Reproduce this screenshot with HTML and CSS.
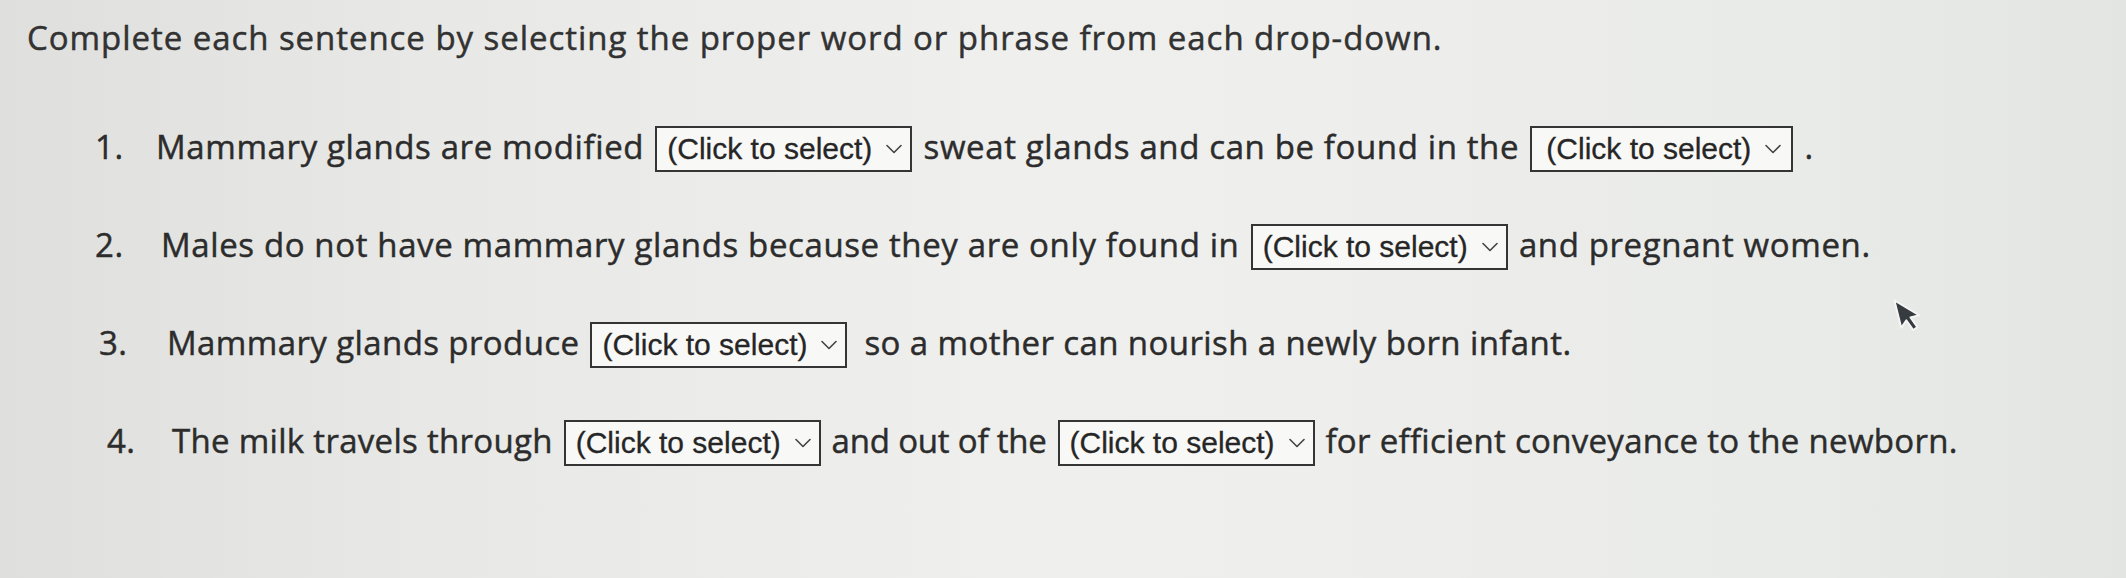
FILE: index.html
```html
<!DOCTYPE html>
<html lang="en">
<head>
<meta charset="utf-8">
<title>Complete each sentence</title>
<link rel="stylesheet" href="styles.css">
</head>
<body>
<main class="page">
  <p class="instructions">Complete each sentence by selecting the proper word or phrase from each drop-down.</p>
  <ol class="questions">
    <li class="item item-1">
      <span class="num">1.</span>
      <p class="sentence">Mammary glands are modified <span class="dropdown" role="combobox"><span class="dd-label">(Click to select)</span><svg class="chev" viewBox="0 0 16 10" width="16" height="10"><polyline points="1,1.5 8,8.5 15,1.5"/></svg></span> sweat glands and can be found in the <span class="dropdown dropdown-wide" role="combobox"><span class="dd-label">(Click to select)</span><svg class="chev" viewBox="0 0 16 10" width="16" height="10"><polyline points="1,1.5 8,8.5 15,1.5"/></svg></span> .</p>
    </li>
    <li class="item item-2">
      <span class="num">2.</span>
      <p class="sentence">Males do not have mammary glands because they are only found in <span class="dropdown" role="combobox"><span class="dd-label">(Click to select)</span><svg class="chev" viewBox="0 0 16 10" width="16" height="10"><polyline points="1,1.5 8,8.5 15,1.5"/></svg></span> and pregnant women.</p>
    </li>
    <li class="item item-3">
      <span class="num">3.</span>
      <p class="sentence">Mammary glands produce <span class="dropdown dropdown-spaced" role="combobox"><span class="dd-label">(Click to select)</span><svg class="chev" viewBox="0 0 16 10" width="16" height="10"><polyline points="1,1.5 8,8.5 15,1.5"/></svg></span> so a mother can nourish a newly born infant.</p>
    </li>
    <li class="item item-4">
      <span class="num">4.</span>
      <p class="sentence">The milk travels through <span class="dropdown" role="combobox"><span class="dd-label">(Click to select)</span><svg class="chev" viewBox="0 0 16 10" width="16" height="10"><polyline points="1,1.5 8,8.5 15,1.5"/></svg></span> <span class="tight">and out of the</span> <span class="dropdown" role="combobox"><span class="dd-label">(Click to select)</span><svg class="chev" viewBox="0 0 16 10" width="16" height="10"><polyline points="1,1.5 8,8.5 15,1.5"/></svg></span> for efficient conveyance to the newborn.</p>
    </li>
  </ol>
  <svg class="cursor" viewBox="0 0 16 26" width="25" height="41" aria-hidden="true">
    <path d="M1.5 1.5 L1.5 19.5 L5.8 15.6 L8.6 22.8 L11.6 21.6 L8.8 14.5 L14.5 14.5 Z"/>
  </svg>
</main>
</body>
</html>
```

FILE: styles.css
```css
html, body {
  margin: 0;
  padding: 0;
}

body {
  width: 2126px;
  height: 578px;
  overflow: hidden;
  background: linear-gradient(90deg, #dfdfdd 0%, #e8e8e6 20%, #efefed 48%, #eeeeec 62%, #e9ebe9 85%, #e3e5e3 100%);
  color: #2c2c2c;
  font-family: "Open Sans", "Liberation Sans", Arial, sans-serif;
  font-size: 33px;
  letter-spacing: 0.5px;
  -webkit-text-stroke: 0.45px #2c2c2c;
}

.page {
  position: relative;
  height: 578px;
  padding: 16px 0 0 27px;
  box-sizing: border-box;
}

.instructions {
  margin: 0;
  line-height: 44px;
  white-space: nowrap;
  letter-spacing: 0.95px;
  color: #333333;
}

.questions {
  list-style: none;
  margin: 38px 0 0;
  padding: 0;
}

.item {
  display: flex;
  align-items: baseline;
  line-height: 98px;
  white-space: nowrap;
}

.item-1 { padding-left: 68px; letter-spacing: 0.62px; }
.item-2 { padding-left: 68px; letter-spacing: 0.62px; }
.item-3 { padding-left: 72px; letter-spacing: 0.4px; }
.item-4 { padding-left: 80px; letter-spacing: 0.3px; }

.tight {
  letter-spacing: -0.2px;
}

.num {
  flex: none;
  width: 61px;
}

.item-2 .num { width: 66px; }
.item-3 .num { width: 68px; }
.item-4 .num { width: 65px; }

.sentence {
  margin: 0;
}

.dropdown {
  display: inline-flex;
  align-items: center;
  gap: 14px;
  height: 46px;
  box-sizing: border-box;
  padding: 0 8px 0 10px;
  margin: 0 2px;
  border: 2px solid #353535;
  background: #f8f8f7;
  font-family: "Liberation Sans", Arial, sans-serif;
  font-size: 30px;
  letter-spacing: 0;
  line-height: normal;
  color: #262626;
  -webkit-text-stroke: 0.3px #262626;
  vertical-align: baseline;
}

.dropdown-wide {
  padding-left: 14px;
  padding-right: 10px;
}

.dropdown-spaced {
  margin-right: 8px;
}

.chev {
  flex: none;
  fill: none;
  stroke: #444444;
  stroke-width: 1.6;
  stroke-linecap: round;
  stroke-linejoin: round;
}

.cursor {
  position: absolute;
  left: 1892px;
  top: 298px;
  transform: rotate(-14deg);
  transform-origin: 2px 2px;
}

.cursor path {
  fill: #363b40;
  stroke: #f6f6f6;
  stroke-width: 1.2;
  stroke-linejoin: round;
}
```
